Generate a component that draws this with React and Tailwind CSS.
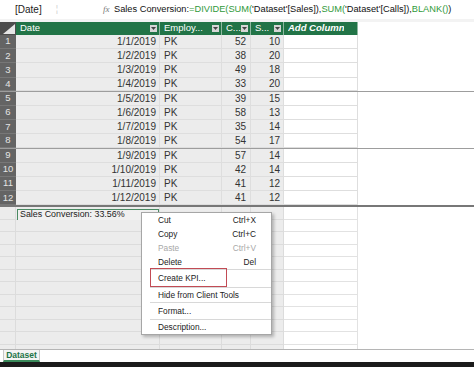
const COLS = ['w-[16px]', 'w-[144px]', 'w-[62px]', 'w-[29px]', 'w-[33px]', 'w-[74px]'];

const rows = [
  ['1/1/2019', 52, 10],
  ['1/2/2019', 38, 20],
  ['1/3/2019', 49, 18],
  ['1/4/2019', 33, 20],
  ['1/5/2019', 39, 15],
  ['1/6/2019', 58, 13],
  ['1/7/2019', 35, 14],
  ['1/8/2019', 54, 17],
  ['1/9/2019', 57, 14],
  ['1/10/2019', 42, 14],
  ['1/11/2019', 41, 12],
  ['1/12/2019', 41, 12],
];

function Dropdown() {
  return (
    <span className="flex h-[7px] w-[7px] shrink-0 items-center justify-center bg-[#d6d6d6]">
      <svg width="5" height="3" viewBox="0 0 5 3">
        <polygon points="0,0 5,0 2.5,3" fill="#444" />
      </svg>
    </span>
  );
}

function HeaderCell({ width, label, italic }) {
  return (
    <div className={`${width} flex h-full items-center justify-between border-r border-[#8fb8a0] pl-[4px] pr-[2px]`}>
      <span className={`truncate text-[9.5px] text-white ${italic ? 'font-bold italic' : ''}`}>{label}</span>
      {!italic ? <Dropdown /> : null}
    </div>
  );
}

const fn = 'text-[#2f9a3a]';

function MenuItem({ label, shortcut, disabled, className = 'h-[14px]' }) {
  return (
    <div className={`flex items-center justify-between pl-[16px] pr-[15px] text-[8.3px] ${className} ${disabled ? 'text-[#a8a8a8]' : 'text-[#222]'}`}>
      <span>{label}</span>
      {shortcut ? <span>{shortcut}</span> : null}
    </div>
  );
}

function Sep() {
  return <div className="ml-[8px] h-px bg-[#d8d8d8]" />;
}

export default function App() {
  return (
    <div className="relative h-[367px] w-[474px] overflow-hidden bg-white font-['Liberation_Sans',Arial,sans-serif] text-[#333]">
      {/* formula bar */}
      <div className="flex h-[19px] items-center bg-white">
        <div className="flex w-[100px] items-center pl-[15px] text-[10px] text-[#222]">
          <span>[Date]</span>
          <span className="ml-[14px] text-[9px] text-[#d0d0d0]">¦</span>
        </div>
        <span className="ml-[3px] w-[11px] font-['Liberation_Serif',serif] text-[9px] italic text-[#777]">fx</span>
        <span className="whitespace-nowrap text-[9.25px] text-[#111]">
          Sales Conversion:<span className={fn}>=DIVIDE(SUM(</span>'Dataset'[Sales]),<span className={fn}>SUM(</span>'Dataset'[Calls]),<span className={fn}>BLANK()</span>)
        </span>
      </div>
      <div className="h-[3px] bg-[#f3f3f3]" />

      {/* header */}
      <div className="flex h-[13px]">
        <div className={`${COLS[0]} relative h-full bg-[#4d4d4d]`}>
          <svg className="absolute inset-0" width="16" height="13" viewBox="0 0 16 13">
            <polygon points="3,12 15,12 15,2" fill="#e6e6e6" />
          </svg>
        </div>
        <div className="flex bg-[#227447]">
          <HeaderCell width={COLS[1]} label="Date" />
          <HeaderCell width={COLS[2]} label="Employ..." />
          <HeaderCell width={COLS[3]} label="C..." />
          <HeaderCell width={COLS[4]} label="S..." />
          <HeaderCell width={COLS[5]} label="Add Column" italic />
        </div>
      </div>

      {/* data rows */}
      {rows.map(([date, c, s], i) => (
        <div
          key={date}
          className={`flex h-[14.2px] text-[10px] ${i === 3 || i === 7 ? 'border-b border-[#9d9d9d]' : ''}`}
        >
          <div className={`${COLS[0]} flex items-center justify-center border-b border-[#777] bg-[#646464] text-[9.5px] text-[#e4e4e4]`}>
            {i + 1}
          </div>
          <div className={`${COLS[1]} flex items-center justify-end border-b border-r border-[#dedede] bg-[#ececec] pr-[3px]`}>{date}</div>
          <div className={`${COLS[2]} flex items-center border-b border-r border-[#dedede] bg-[#ececec] pl-[4px]`}>PK</div>
          <div className={`${COLS[3]} flex items-center justify-end border-b border-r border-[#dedede] bg-[#ececec] pr-[4px]`}>{c}</div>
          <div className={`${COLS[4]} flex items-center justify-end border-b border-r border-[#dedede] bg-[#ececec] pr-[3px]`}>{s}</div>
          <div className={`${COLS[5]} border-b border-r border-[#dedede] bg-white`} />
        </div>
      ))}

      {/* splitter */}
      <div className="h-[2px] bg-[#777]" />

      {/* measure grid */}
      <div className="h-[142px] overflow-hidden">
        {Array.from({ length: 12 }).map((_, i) => (
          <div key={i} className="flex h-[12.5px]">
            <div className={`${COLS[0]} border-b border-r border-[#dcdcdc] bg-[#ececec]`} />
            <div className={`${COLS[1]} border-b border-r border-[#dcdcdc] bg-[#ececec]`}>
              {i === 0 ? (
                <div className="ml-px mt-[1.5px] flex h-[12px] items-center border-[1.5px] border-[#4a8a63] bg-[#f0f0f0] pl-[2px] text-[8.9px] text-[#222]">
                  Sales Conversion: 33.56%
                </div>
              ) : null}
            </div>
            <div className={`${COLS[2]} border-b border-r border-[#dcdcdc] bg-[#ececec]`} />
            <div className={`${COLS[3]} border-b border-r border-[#dcdcdc] bg-[#ececec]`} />
            <div className={`${COLS[4]} border-b border-r border-[#dcdcdc] bg-[#ececec]`} />
            <div className={`${COLS[5]} border-b border-r border-[#e2e2e2] bg-white`} />
          </div>
        ))}
      </div>

      {/* sheet tabs */}
      <div className="flex h-[13px] border-t border-[#b5b5b5] bg-white">
        <div className="ml-[3px] flex w-[37px] items-center justify-center border-x border-b-2 border-x-[#c8c8c8] border-b-[#3a8a5a] bg-[#f4f4f4] text-[8.5px] font-bold text-[#217346]">
          Dataset
        </div>
      </div>
      <div className="h-[5px] bg-[#1b1b1b]" />

      {/* context menu */}
      <div className="absolute left-[141px] top-[212px] w-[131px] border border-[#a6a6a6] bg-white shadow-[2px_2px_3px_rgba(0,0,0,0.25)]">
        <MenuItem label="Cut" shortcut="Ctrl+X" />
        <MenuItem label="Copy" shortcut="Ctrl+C" />
        <MenuItem label="Paste" shortcut="Ctrl+V" disabled />
        <MenuItem label="Delete" shortcut="Del" />
        <Sep />
        <MenuItem label="Create KPI..." className="h-[17px]" />
        <Sep />
        <MenuItem label="Hide from Client Tools" />
        <Sep />
        <MenuItem label="Format..." className="h-[16px]" />
        <Sep />
        <MenuItem label="Description..." />
        <div className="absolute left-[8px] top-[55px] h-[19px] w-[77px] border-[1.5px] border-[#c24b55]" />
      </div>
    </div>
  );
}
